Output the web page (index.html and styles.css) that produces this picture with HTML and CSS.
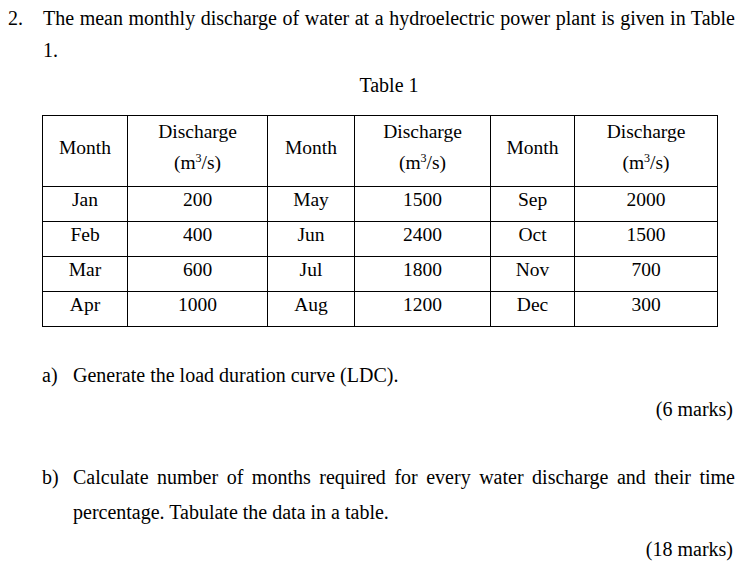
FILE: index.html
```html
<!DOCTYPE html>
<html lang="en">
<head>
<meta charset="utf-8">
<title>Question 2</title>
<link rel="stylesheet" href="styles.css">
</head>
<body>
<div class="page">
  <div class="question">
    <div class="qnum">2.</div>
    <div class="qbody">
      <p class="qtext">The mean monthly discharge of water at a hydroelectric power plant is given in Table 1.</p>
      <div class="caption">Table 1</div>
      <table class="data">
        <colgroup>
          <col class="c1"><col class="c2"><col class="c3"><col class="c4"><col class="c5"><col class="c6">
        </colgroup>
        <thead>
          <tr>
            <th>Month</th>
            <th class="two">Discharge<br>(m<sup class="sup">3</sup>/s)</th>
            <th>Month</th>
            <th class="two">Discharge<br>(m<sup class="sup">3</sup>/s)</th>
            <th>Month</th>
            <th class="two">Discharge<br>(m<sup class="sup">3</sup>/s)</th>
          </tr>
        </thead>
        <tbody>
          <tr><td>Jan</td><td>200</td><td>May</td><td>1500</td><td>Sep</td><td>2000</td></tr>
          <tr><td>Feb</td><td>400</td><td>Jun</td><td>2400</td><td>Oct</td><td>1500</td></tr>
          <tr><td>Mar</td><td>600</td><td>Jul</td><td>1800</td><td>Nov</td><td>700</td></tr>
          <tr><td>Apr</td><td>1000</td><td>Aug</td><td>1200</td><td>Dec</td><td>300</td></tr>
        </tbody>
      </table>

      <div class="part part-a">
        <div class="plabel">a)</div>
        <p class="ptext">Generate the load duration curve (LDC).</p>
      </div>
      <div class="marks marks-a">(6 marks)</div>

      <div class="part part-b">
        <div class="plabel">b)</div>
        <p class="ptext">Calculate number of months required for every water discharge and their time percentage. Tabulate the data in a table.</p>
      </div>
      <div class="marks marks-b">(18 marks)</div>
    </div>
  </div>
</div>
</body>
</html>
```

FILE: styles.css
```css
html, body {
  margin: 0;
  padding: 0;
  background: #ffffff;
}

body {
  font-family: "Liberation Serif", "Times New Roman", serif;
  font-size: 20px;
  color: #000000;
}

.page {
  padding: 2px 11px 0 8px;
}

.question {
  display: grid;
  grid-template-columns: 35px 1fr;
}

.qnum {
  line-height: 32px;
}

.qtext {
  margin: 0;
  line-height: 32px;
  text-align: justify;
}

.caption {
  margin-top: 3px;
  line-height: 32px;
  text-align: center;
}

.data {
  margin: 14px 0 0 -1px;
  border-collapse: collapse;
  table-layout: fixed;
  width: 675px;
  font-size: 19.5px;
}

.c1 { width: 85px; }
.c2 { width: 140px; }
.c3 { width: 87px; }
.c4 { width: 136px; }
.c5 { width: 84px; }
.c6 { width: 143px; }

.data th,
.data td {
  border: 1px solid #000000;
  text-align: center;
  vertical-align: middle;
  font-weight: normal;
  padding: 0 0 8px 0;
}

.data th {
  height: 61px;
  line-height: 31px;
  padding-bottom: 8px;
}

.data td {
  height: 26px;
  line-height: 24px;
}

.sup {
  font-size: 0.62em;
  line-height: 0;
  vertical-align: 0.55em;
}

.part {
  display: grid;
  grid-template-columns: 31px 1fr;
  margin-left: -1px;
}

.part-a {
  margin-top: 31px;
  line-height: 34px;
}

.part-b {
  margin-top: 34px;
  line-height: 35px;
}

.ptext {
  margin: 0;
  text-align: justify;
}

.marks {
  text-align: right;
  line-height: 34px;
  padding-right: 2px;
}

.marks-b {
  margin-top: 2px;
}
```
